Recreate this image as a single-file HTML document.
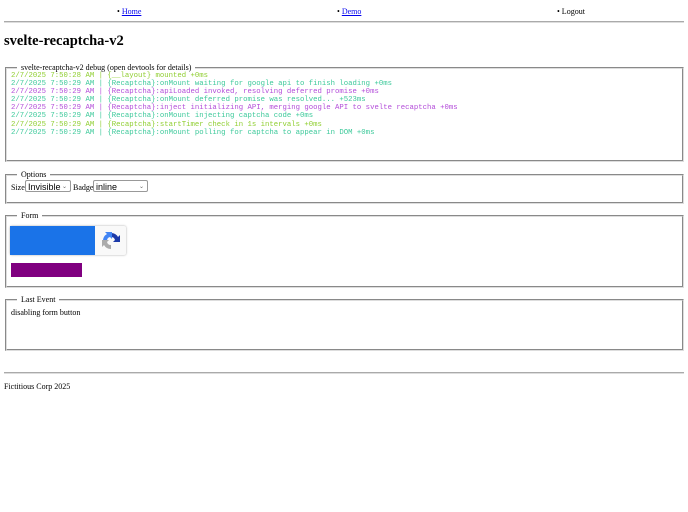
<!DOCTYPE html>
<html><head><style>
body{margin:0;font-family:"Liberation Serif",serif;font-size:8px;color:#000;background:#fff;position:relative;width:688px;height:512px;overflow:hidden}
.a{position:absolute}
fieldset{position:absolute;margin:0;padding:0;border:2px groove #ddd;box-sizing:border-box}
legend{font-size:8px;padding:0 4px;margin-left:10px}
.hr{position:absolute;left:4px;width:680px;height:0;border-top:1px solid #aaa;border-bottom:1px solid #ddd}
.log{position:absolute;left:11px;top:72px;font-family:"Liberation Mono",monospace;font-size:7.3px;line-height:8.1px;white-space:pre}
.g{color:#8fce2f}.t{color:#3cc99a}.p{color:#b34cd9}
.sel{position:absolute;font-family:"Liberation Sans",sans-serif;font-size:9px;height:12px;line-height:12px;border:1px solid #999;background:#fff;padding:0 2px;border-radius:2px;box-sizing:border-box}
.sel span{position:absolute;right:3px;top:0;font-size:6px;color:#666}
</style></head><body>
<div class="a" style="left:117px;top:7px">• <a href="#" style="color:#00e">Home</a></div>
<div class="a" style="left:337px;top:7px">• <a href="#" style="color:#00e">Demo</a></div>
<div class="a" style="left:557px;top:7px">• Logout</div>
<div class="hr" style="top:21px"></div>
<div class="a" style="left:4px;top:33px;font-size:14.5px;font-weight:bold">svelte-recaptcha-v2</div>
<fieldset style="left:5px;top:63px;width:679px;height:99px"><legend>svelte-recaptcha-v2 debug (open devtools for details)</legend></fieldset>
<div class="log"><span class="g">2/7/2025 7:50:28 AM | {__layout} mounted +0ms</span>
<span class="t">2/7/2025 7:50:29 AM | {Recaptcha}:onMount waiting for google api to finish loading +0ms</span>
<span class="p">2/7/2025 7:50:29 AM | {Recaptcha}:apiLoaded invoked, resolving deferred promise +0ms</span>
<span class="t">2/7/2025 7:50:29 AM | {Recaptcha}:onMount deferred promise was resolved... +523ms</span>
<span class="p">2/7/2025 7:50:29 AM | {Recaptcha}:inject initializing API, merging google API to svelte recaptcha +0ms</span>
<span class="t">2/7/2025 7:50:29 AM | {Recaptcha}:onMount injecting captcha code +0ms</span>
<span class="g">2/7/2025 7:50:29 AM | {Recaptcha}:startTimer check in 1s intervals +0ms</span>
<span class="t">2/7/2025 7:50:29 AM | {Recaptcha}:onMount polling for captcha to appear in DOM +0ms</span></div>
<fieldset style="left:5px;top:170px;width:679px;height:34px"><legend>Options</legend></fieldset>
<div class="a" style="left:11px;top:183px">Size</div>
<div class="sel" style="left:25px;top:180px;width:46px">Invisible<span>⌄</span></div>
<div class="a" style="left:73px;top:183px">Badge</div>
<div class="sel" style="left:93px;top:180px;width:55px">inline<span>⌄</span></div>
<fieldset style="left:5px;top:211px;width:679px;height:77px"><legend>Form</legend></fieldset>
<div class="a" style="left:10px;top:226px;width:116px;height:29px;background:#f9f9f9;border-radius:2px;box-shadow:0 0 2px #aaa"><div style="width:85px;height:29px;background:#1a73e8"></div>
<svg class="a" style="left:90px;top:4px" width="22" height="22" viewBox="0 0 22 22"><path d="M11 3a8 8 0 0 1 7 4l2-2v7h-7l2-2a4 4 0 0 0-4-3z" fill="#1c3aa9"/><path d="M3 11a8 8 0 0 1 4-7l-2-2h7v7l-2-2a4 4 0 0 0-3 4z" fill="#4285f4"/><path d="M11 19a8 8 0 0 1-7-4l-2 2v-7h7l-2 2a4 4 0 0 0 4 3z" fill="#ababab"/></svg></div>
<div class="a" style="left:11px;top:263px;width:71px;height:14px;background:#800080"></div>
<fieldset style="left:5px;top:295px;width:679px;height:56px"><legend>Last Event</legend></fieldset>
<div class="a" style="left:11px;top:308px">disabling form button</div>
<div class="hr" style="top:372px"></div>
<div class="a" style="left:4px;top:382px">Fictitious Corp 2025</div>
</body></html>
